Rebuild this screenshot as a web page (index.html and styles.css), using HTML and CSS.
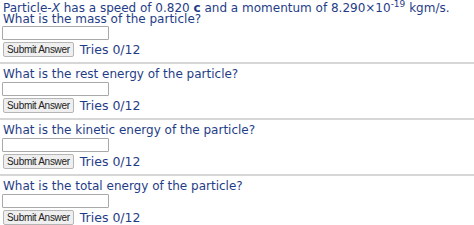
FILE: index.html
```html
<!DOCTYPE html>
<html>
<head>
<meta charset="utf-8">
<link rel="stylesheet" href="styles.css">
</head>
<body>
<div class="page">
  <div class="section">
    <div class="q q-lead">Particle-<i>X</i> has a speed of 0.820 <b>c</b> and a momentum of 8.290×10<sup>-19</sup> kgm/s.</div>
    <div class="q q-tight">What is the mass of the particle?</div>
    <input class="answer" type="text">
    <div class="row"><button class="submit">Submit Answer</button><span class="tries">Tries 0/12</span></div>
  </div>
  <hr class="sep">
  <div class="section">
    <div class="q">What is the rest energy of the particle?</div>
    <input class="answer" type="text">
    <div class="row"><button class="submit">Submit Answer</button><span class="tries">Tries 0/12</span></div>
  </div>
  <hr class="sep">
  <div class="section">
    <div class="q">What is the kinetic energy of the particle?</div>
    <input class="answer" type="text">
    <div class="row"><button class="submit">Submit Answer</button><span class="tries">Tries 0/12</span></div>
  </div>
  <hr class="sep">
  <div class="section">
    <div class="q">What is the total energy of the particle?</div>
    <input class="answer" type="text">
    <div class="row"><button class="submit">Submit Answer</button><span class="tries">Tries 0/12</span></div>
  </div>
</div>
</body>
</html>
```
FILE: styles.css
```css
html, body {
  margin: 0;
  padding: 0;
  background: #fff;
}
.page {
  font-family: "DejaVu Sans", Verdana, sans-serif;
  font-size: 12px;
  color: #1f3d87;
  padding: 4px 0 0 3px;
}
.section {
  display: flex;
  flex-direction: column;
  align-items: flex-start;
}
.q {
  line-height: 9px;
  height: 9px;
  margin-bottom: 3px;
  white-space: nowrap;
}
.q-lead {
  margin-bottom: 2px;
}
.q-tight {
  margin-bottom: 2px;
}
.q sup {
  font-size: 9px;
  line-height: 0;
  vertical-align: 5px;
}
.answer {
  display: block;
  box-sizing: border-box;
  width: 107px;
  height: 14px;
  margin: 0 0 2px -1px;
  padding: 0;
  border: 1px solid #a9a9a9;
  border-radius: 1px;
  background: #fff;
}
.row {
  display: flex;
  align-items: center;
  gap: 6px;
  height: 15px;
}
.submit {
  box-sizing: border-box;
  font-family: "Liberation Sans", Arial, sans-serif;
  font-size: 10px;
  color: #222;
  height: 15px;
  padding: 0 3px;
  border: 1px solid #b5b5b5;
  border-radius: 2px;
  background: #efefef;
  letter-spacing: -0.3px;
}
.tries {
  font-size: 12.5px;
}
.sep {
  margin: 5px 0 6px -3px;
  border: 0;
  border-top: 2px solid #d6d6d6;
  height: 0;
}
```
